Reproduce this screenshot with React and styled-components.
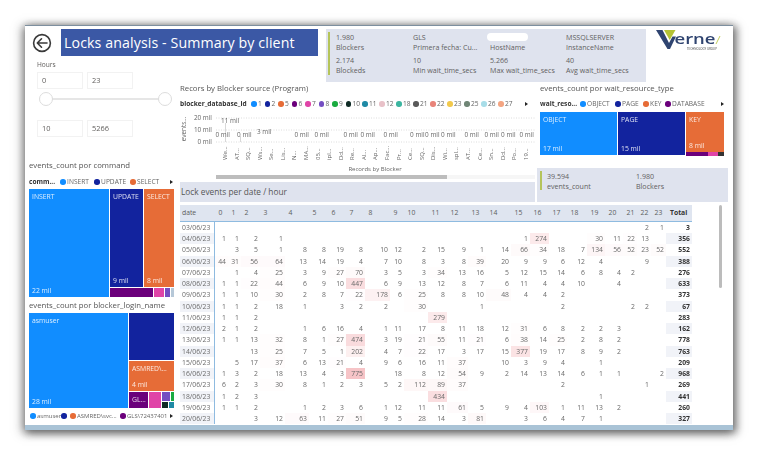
import React from 'react';
import styled, { createGlobalStyle } from 'styled-components';

const Global = createGlobalStyle`
  html, body { margin: 0; padding: 0; background: #fff; width: 759px; height: 454px; overflow: hidden; }
  * { box-sizing: border-box; }
  body { font-family: "Open Sans", "Noto Sans", sans-serif; color: #605e5c; }
`;

const Page = styled.div`
  width: 759px;
  height: 454px;
  padding: 25px 26px 24px 25px;
`;

const Report = styled.main`
  width: 708px;
  height: 405px;
  background: #fff;
  border-top: 1px solid #7d8f9f;
  border-bottom: 5px solid #a9c3d6;
  box-shadow: -2px 2px 9px 1px rgba(50, 50, 50, 0.5), 3px 2px 8px 1px rgba(50, 50, 50, 0.55);
  padding: 3px 5px 0 4px;
  filter: blur(0.45px);
  overflow: hidden;
`;

const Layout = styled.div`
  display: grid;
  grid-template-columns: 32px 119px 146px 211px 109px 82px;
  grid-template-rows: 27px 26px 86px 14px 23px 220px;
  grid-template-areas:
    "back title title kpi kpi logo"
    "left left . kpi kpi logo"
    "left left chart chart wait wait"
    "left left chart chart side side"
    "left left head head side side"
    "left left table table table table";
`;

const BackButton = styled.div`
  grid-area: back;
  padding: 4px 0 0 3px;
  color: #3a3a3a;
`;

const Title = styled.h1`
  grid-area: title;
  margin: 0 8px 0 0;
  background: #3b58a5;
  color: #fff;
  font-size: 14.2px;
  font-weight: 400;
  line-height: 27px;
  padding-left: 3px;
  white-space: nowrap;
  letter-spacing: 0.1px;
`;

const Kpi = styled.section`
  grid-area: kpi;
  background: #dfe3ee;
  display: flex;
  padding: 3px 0 0 2px;
  height: 53px;
`;

const KpiBar = styled.div`
  width: 2px;
  height: 43px;
  background: #b5c45a;
  margin-right: 6px;
  flex: none;
`;

const KpiGrid = styled.div`
  display: grid;
  grid-template-columns: 77px 77px 76px 76px;
  grid-template-rows: repeat(2, 23px);
`;

const KpiCell = styled.div`
  font-size: 7.1px;
  line-height: 10px;
  color: #5f5f5f;
  white-space: nowrap;
`;

const Blob = styled.span`
  display: block;
  width: 41px;
  height: 8px;
  margin: 1px 0 1px -3px;
  background: #fff;
  border-radius: 4px;
`;

const LogoBox = styled.div`
  grid-area: logo;
  padding: 0 0 0 10px;
  margin-top: -2px;
`;

const LeftColumn = styled.aside`
  grid-area: left;
  display: flex;
  flex-direction: column;
  padding-top: 4px;
  width: 146px;
`;

const SliderBlock = styled.div`
  padding: 0 0 0 8px;
  height: 99px;
`;

const SmallLabel = styled.div`
  font-size: 6.6px;
  line-height: 9px;
  margin-bottom: 3px;
`;

const InputRow = styled.div`
  display: flex;
  gap: 4px;
`;

const NumberBox = styled.div`
  width: 46px;
  height: 17px;
  border: 1px solid #f2f2f2;
  font-size: 7.4px;
  line-height: 15px;
  padding-left: 4px;
`;

const Track = styled.div`
  position: relative;
  height: 31px;
  width: 129px;
  margin-left: 2px;
`;

const TrackLine = styled.div`
  position: absolute;
  left: 7px;
  right: -2px;
  top: 9px;
  height: 2px;
  background: #e6e6e6;
`;

const Handle = styled.div`
  position: absolute;
  top: 3px;
  left: ${p => p.$left}px;
  width: 14px;
  height: 14px;
  border-radius: 50%;
  background: #fff;
  border: 1px solid #dcdcdc;
`;

const ChartTitle = styled.h2`
  margin: 0;
  font-size: 7.75px;
  font-weight: 400;
  line-height: 12px;
  color: #555;
  white-space: nowrap;
`;

const Legend = styled.div`
  display: flex;
  align-items: center;
  height: 10px;
  font-size: 6.6px;
  line-height: 10px;
  white-space: nowrap;
  color: #666;
  position: relative;
`;

const LegendName = styled.strong`
  font-weight: 700;
  color: #333;
  margin-right: ${p => p.$gap || 5}px;
  font-size: 6.6px;
`;

const LegendItem = styled.span`
  display: inline-flex;
  align-items: center;
  width: ${p => (p.$w ? `${p.$w}px` : 'auto')};
  flex: none;
`;

const Dot = styled.i`
  display: block;
  width: 5.5px;
  height: 5.5px;
  border-radius: 50%;
  background: ${p => p.$c};
  margin-right: 1.5px;
  flex: none;
`;

const More = styled.span`
  position: absolute;
  left: ${p => p.$left}px;
  top: 2.5px;
  width: 0;
  height: 0;
  border-left: 3px solid #222;
  border-top: 2.5px solid transparent;
  border-bottom: 2.5px solid transparent;
`;

const Map = styled.div`
  display: flex;
  gap: ${p => p.$gap ?? 1}px;
  flex-direction: ${p => (p.$col ? 'column' : 'row')};
  width: ${p => (p.$w ? `${p.$w}px` : 'auto')};
  height: ${p => (p.$h ? `${p.$h}px` : 'auto')};
  flex: ${p => (p.$grow ? 1 : 'none')};
  min-height: 0;
`;

const Tile = styled.div`
  background: ${p => p.$c};
  width: ${p => (p.$w ? `${p.$w}px` : 'auto')};
  height: ${p => (p.$h ? `${p.$h}px` : 'auto')};
  flex: ${p => (p.$grow ? 1 : 'none')};
  color: rgba(255, 255, 255, 0.85);
  font-size: 6.8px;
  line-height: 10px;
  padding: 3px 0 1px 3px;
  display: flex;
  flex-direction: column;
  justify-content: space-between;
  overflow: hidden;
  white-space: nowrap;
`;

const ChartBox = styled.section`
  grid-area: chart;
`;

const WaitBox = styled.section`
  grid-area: wait;
  padding-left: 3px;
`;

const SideKpi = styled.section`
  grid-area: side;
  background: #dfe3ee;
  display: flex;
  padding: 3px 0 0 3px;
  margin-bottom: 3px;
`;

const SideBar = styled.div`
  width: 2px;
  height: 19px;
  background: #b5c45a;
  margin-right: 5px;
`;

const SideGrid = styled.div`
  display: grid;
  grid-template-columns: 89px 60px;
`;

const SectionHead = styled.div`
  grid-area: head;
  background: #dfe3ee;
  font-size: 8.3px;
  line-height: 20px;
  padding-left: 1px;
  color: #555;
  margin: 0 2px 3px 0;
`;

const TableBox = styled.section`
  grid-area: table;
  position: relative;
  overflow: hidden;
  font-size: 6.8px;
  color: #6a6a6a;
`;

const COLS = '35px 13px 13px 19px 25px 24px 19px 18px 19px 25px 14px 24px 19px 21px 18px 25px 19px 19px 18px 20px 18px 18px 14px 14px 15px 26px';

const HeaderRow = styled.div`
  display: grid;
  grid-template-columns: ${COLS};
  height: 17px;
  width: 512px;
  background: #dfe5f0;
  border-bottom: 1px solid #8fbbe0;
  line-height: 15px;
`;

const HeadCell = styled.span`
  padding-left: ${p => (p.$first ? 2 : 3.5)}px;
  white-space: nowrap;
  color: #5c5c5c;
`;

const HeadTotal = styled.strong`
  font-weight: 700;
  color: #333;
  padding-left: 4px;
`;

const DataRow = styled.div`
  display: grid;
  grid-template-columns: ${COLS};
  height: 11.24px;
  width: 512px;
  line-height: 11.24px;
`;

const DateCell = styled.span`
  padding-left: 2px;
  border-right: 1px solid #8fbbe0;
  background: ${p => (p.$alt ? '#f1f3f8' : '#fff')};
  white-space: nowrap;
  overflow: hidden;
`;

const Cell = styled.span`
  text-align: right;
  padding-right: 2px;
  white-space: nowrap;
`;

const TotalCell = styled.strong`
  font-weight: 700;
  color: #333;
  text-align: right;
  padding-right: 2px;
  background: ${p => (p.$alt ? '#f1f3f8' : '#fff')};
`;

const ScrollThumb = styled.div`
  position: absolute;
  left: 539px;
  top: 0;
  width: 3px;
  height: 83px;
  border-radius: 2px;
  background: #bcbcbc;
`;

const PlotText = styled.text`
  font-family: "Open Sans", "Noto Sans", sans-serif;
  font-size: ${p => p.$s || 6.4}px;
  fill: #666;
`;

const PlotSvg = styled.svg`
  display: block;
`;

const dbLegend = [
  ['1', '#118dff'], ['2', '#12239e'], ['5', '#e66c37'], ['6', '#6b007b'], ['7', '#e044a7'], ['8', '#744ec2'],
  ['9', '#1aab40'], ['10', '#0e2a24'], ['11', '#1f8aa5'], ['12', '#e8c1c8'], ['18', '#3cb5a0'], ['21', '#5a5a5a'],
  ['22', '#e8847a'], ['23', '#f2c94c'], ['25', '#6f8575'], ['26', '#a8dde8'], ['27', '#f4a582'],
];
const dbWidth = [13.5, 13.5, 13.5, 13.5, 13.5, 13.5, 13.5, 16.5, 17, 17, 17, 17, 17, 17, 17, 17, 17];

const axisLabels = ['We...', 'AT...', 'SQ...', 'Ws...', 'Se...', 'Lis...', 'N...', 'MA...', '05...', 'ipl...', 'Dd...', 'Re...', 'Al...', 'Ap...', 'Fac...', 'Pr...', 'Ce...', 'SQ...', 'Dis...', 'Wi...', 'spl...', 'AT...', 'Ce...', 'Sn...', 'Dd...', 'Po...', '19...'];
const zeroLabels = [143, 208, 380, 440, 527, 578, 647, 727, 772, 820, 890, 950, 1000, 1055];

const rows = [
  ['03/06/23', {22:2,23:1}, 3],
  ['04/06/23', {0:1,1:1,2:2,3:1,15:1,16:274,19:30,20:11,21:22,22:13}, 356],
  ['05/06/23', {1:3,2:5,3:1,4:8,5:8,6:19,7:8,8:10,9:12,10:2,11:15,12:9,13:1,14:14,15:66,16:34,17:18,18:7,19:134,20:56,21:52,22:23,23:52}, 552],
  ['06/06/23', {0:44,1:31,2:56,3:64,4:13,5:14,6:19,7:4,8:7,9:10,10:8,11:3,12:8,13:39,14:20,15:9,16:9,17:6,18:12,19:4,22:9}, 388],
  ['07/06/23', {1:1,2:4,3:25,4:3,5:9,6:27,7:70,8:3,9:5,10:3,11:34,12:13,13:16,14:5,15:12,16:15,17:14,18:6,19:8,20:4,21:2}, 276],
  ['08/06/23', {0:1,1:1,2:22,3:44,4:6,5:9,6:10,7:447,8:6,9:9,10:13,11:12,12:8,13:7,14:6,15:11,16:4,17:4,18:10,20:4}, 633],
  ['09/06/23', {0:1,1:1,2:10,3:30,4:2,5:8,6:7,7:22,8:178,9:6,10:25,11:8,12:8,13:10,14:48,15:4,16:4,17:2}, 373],
  ['10/06/23', {0:1,1:1,2:2,3:18,4:1,6:3,7:2,8:2,10:30,13:1,17:2,21:2,22:2}, 67],
  ['11/06/23', {0:1,1:1,2:2,11:279}, 283],
  ['12/06/23', {0:2,1:1,2:2,4:1,5:6,6:16,7:4,8:1,9:11,10:17,11:8,12:11,13:18,14:12,15:31,16:6,17:8,18:2,19:2,20:3}, 162],
  ['13/06/23', {0:1,1:1,2:13,3:32,4:8,5:1,6:27,7:474,8:3,9:19,10:21,11:55,12:11,13:21,14:6,15:38,16:14,17:25,18:2,19:8,20:2}, 778],
  ['14/06/23', {2:13,3:25,4:7,5:5,6:1,7:202,8:4,9:7,10:22,11:17,12:3,13:17,14:15,15:377,16:19,17:17,18:8,19:9,20:2}, 763],
  ['15/06/23', {1:5,2:17,3:37,4:6,5:13,6:21,7:4,8:9,9:6,10:16,11:11,12:37,14:10,15:3,16:9,17:4,19:1}, 209],
  ['16/06/23', {0:1,1:3,2:2,3:18,4:13,5:4,6:3,7:775,9:18,10:8,11:12,12:54,13:9,14:2,15:14,16:13,17:14,18:6,19:1,20:1,23:2}, 968],
  ['17/06/23', {0:6,1:2,2:3,3:30,4:8,5:1,6:2,7:3,8:5,9:2,10:112,11:89,12:37,17:2,22:1}, 269],
  ['18/06/23', {0:1,1:2,2:3,11:434,19:1}, 441],
  ['19/06/23', {0:1,1:1,2:2,4:1,5:2,6:3,7:6,8:1,9:12,10:11,11:11,12:61,13:5,14:9,15:4,16:103,17:1,18:11,19:13,20:2}, 260],
  ['20/06/23', {2:3,3:12,4:63,5:11,6:27,7:51,8:9,9:5,10:28,11:14,12:3,13:81,15:3,16:6,17:4,18:7,19:1}, 327],
];
const hours = Array.from({ length: 24 }, (_, i) => i);
const heat = v => (v && v > 20 ? `rgba(224, 60, 70, ${Math.min(0.3, (v / 775) * 0.3).toFixed(3)})` : undefined);

const BackIcon = () => (
  <svg width="20" height="20" viewBox="0 0 20 20" fill="none" stroke="#3a3a3a" strokeWidth="1.6">
    <circle cx="10" cy="10" r="8.4" />
    <path d="M15 10H5.5M9.5 5.8 5.3 10l4.2 4.2" strokeLinecap="round" strokeLinejoin="round" />
  </svg>
);

const Logo = () => (
  <svg width="68" height="26" viewBox="0 0 68 26">
    <path d="M0 3h6.5l6.5 13 3.5-6.5h3.5L14 22h-2.5z" fill="#2f4470" />
    <path d="M8 3h11.5l-5.8 10z" fill="#b4c234" />
    <text x="18.5" y="17" fontFamily="'Open Sans', sans-serif" fontSize="15" fontWeight="600" fill="#2f4470" textLength="41" lengthAdjust="spacingAndGlyphs">erne</text>
    <path d="M60 17l4-8" stroke="#b4c234" strokeWidth="0.8" />
    <text x="31" y="23" fontFamily="'Open Sans', sans-serif" fontSize="2.6" fill="#444" textLength="30" lengthAdjust="spacingAndGlyphs">TECHNOLOGY GROUP</text>
  </svg>
);

const Plot = () => (
  <PlotSvg width="356" height="76" viewBox="180 108 356 76">
    <g stroke="#cfcfcf" strokeWidth="0.7" strokeDasharray="1 1.5">
      <line x1="216" x2="535" y1="118" y2="118" />
      <line x1="216" x2="535" y1="130" y2="130" />
      <line x1="216" x2="535" y1="142" y2="142" />
    </g>
    <rect x="225" y="123" width="1" height="19" fill="#d8d8d8" />
    <rect x="240" y="136" width="1" height="6" fill="#d8d8d8" />
    <PlotText x="186" y="129" transform="rotate(-90 186 129)" textAnchor="middle">events...</PlotText>
    <PlotText x="212" y="120" textAnchor="end">20 mil</PlotText>
    <PlotText x="212" y="132" textAnchor="end">10 mil</PlotText>
    <PlotText x="212" y="144" textAnchor="end">0 mil</PlotText>
    <PlotText x="221" y="123">11 mil</PlotText>
    <PlotText x="257" y="134">3 mil</PlotText>
    {zeroLabels.map((v, i) => (
      <PlotText key={i} x={175 + v / 3} y={136.5} textAnchor="middle">0 mil</PlotText>
    ))}
    {axisLabels.map((t, i) => {
      const x = 227 + i * 11.57;
      return (
        <PlotText key={i} x={x} y={160} transform={`rotate(-90 ${x} 160)`} $s={6}>{t}</PlotText>
      );
    })}
    <PlotText x="375" y="171" textAnchor="middle" $s={6}>Records by Blocker</PlotText>
    <rect x="216" y="175" width="319" height="4" fill="#f6f6f6" />
    <rect x="216" y="175" width="231" height="4" fill="#bdbdbd" />
  </PlotSvg>
);

const kpis = [
  ['1.980', 'Blockers'], ['GLS', 'Primera fecha: Cu...'], [null, 'HostName'], ['MSSQLSERVER', 'InstanceName'],
  ['2.174', 'Blockeds'], ['10', 'Min wait_time_secs'], ['5.266', 'Max wait_time_secs'], ['40', 'Avg wait_time_secs'],
];

const CommandLegend = styled(Legend)`
  margin: 6px 0 2px;
`;

const LoginTitle = styled(ChartTitle)`
  margin: 2px 0;
`;

const LoginLegend = styled(Legend)`
  margin-top: 3px;
  padding-left: 1px;
  font-size: 6px;
`;

const DbLegend = styled(Legend)`
  margin: 5px 0 -1px;
`;

const WaitLegend = styled(Legend)`
  margin: 5px 0 3px;
`;

export default function App() {
  return (
    <Page>
      <Global />
      <Report>
        <Layout>
          <BackButton><BackIcon /></BackButton>
          <Title>Locks analysis - Summary by client</Title>
          <Kpi>
            <KpiBar />
            <KpiGrid>
              {kpis.map(([a, b]) => (
                <KpiCell key={b}>{a === null ? <Blob /> : <div>{a}</div>}<div>{b}</div></KpiCell>
              ))}
            </KpiGrid>
          </Kpi>
          <LogoBox><Logo /></LogoBox>

          <LeftColumn>
            <SliderBlock>
              <SmallLabel>Hours</SmallLabel>
              <InputRow><NumberBox>0</NumberBox><NumberBox>23</NumberBox></InputRow>
              <Track>
                <TrackLine />
                <Handle $left={0} />
                <Handle $left={119} />
              </Track>
              <InputRow><NumberBox>10</NumberBox><NumberBox>5266</NumberBox></InputRow>
            </SliderBlock>
            <ChartTitle>events_count por command</ChartTitle>
            <CommandLegend>
              <LegendName $gap={5}>comm...</LegendName>
              <LegendItem $w={34}><Dot $c="#118dff" />INSERT</LegendItem>
              <LegendItem $w={36}><Dot $c="#12239e" />UPDATE</LegendItem>
              <LegendItem><Dot $c="#e66c37" />SELECT</LegendItem>
              <More $left={141} />
            </CommandLegend>
            <Map $h={108} $w={145}>
              <Tile $c="#118dff" $w={80}><span>INSERT</span><span>22 mil</span></Tile>
              <Map $col $grow>
                <Map $h={98}>
                  <Tile $c="#12239e" $w={33}><span>UPDATE</span><span>9 mil</span></Tile>
                  <Tile $c="#e66c37" $grow><span>SELECT</span><span>8 mil</span></Tile>
                </Map>
                <Map $grow>
                  <Tile $c="#6b007b" $w={43} />
                  <Tile $c="#e044a7" $w={10} />
                  <Tile $c="#744ec2" $w={5} />
                  <Tile $c="#b6c8d8" $grow />
                </Map>
              </Map>
            </Map>
            <LoginTitle>events_count por blocker_login_name</LoginTitle>
            <Map $h={95} $w={145}>
              <Tile $c="#118dff" $w={99}><span>asmuser</span><span>28 mil</span></Tile>
              <Map $col $grow>
                <Tile $c="#12239e" $h={47} />
                <Tile $c="#e66c37" $h={30}><span>ASMRED\...</span><span>4 mil</span></Tile>
                <Map $grow>
                  <Tile $c="#6b007b" $w={19}><span>GL...</span></Tile>
                  <Tile $c="#e044a7" $w={12} />
                  <Map $col $grow>
                    <Map $h={9}>
                      <Tile $c="#744ec2" $grow />
                      <Tile $c="#1aab40" $w={2} />
                    </Map>
                    <Map $grow>
                      <Tile $c="#0e2a24" $grow />
                      <Tile $c="#1f8aa5" $grow />
                    </Map>
                  </Map>
                </Map>
              </Map>
            </Map>
            <LoginLegend>
              <LegendItem $w={31}><Dot $c="#118dff" />asmuser</LegendItem>
              <LegendItem $w={9}><Dot $c="#12239e" /></LegendItem>
              <LegendItem $w={50}><Dot $c="#e66c37" />ASMRED\svc...</LegendItem>
              <LegendItem><Dot $c="#6b007b" />GLS\72437401</LegendItem>
              <More $left={141} />
            </LoginLegend>
          </LeftColumn>

          <ChartBox>
            <ChartTitle>Recors by Blocker source (Program)</ChartTitle>
            <DbLegend>
              <LegendName $gap={4.5}>blocker_database_id</LegendName>
              {dbLegend.map(([n, c], i) => (
                <LegendItem key={n} $w={dbWidth[i]}><Dot $c={c} />{n}</LegendItem>
              ))}
              <More $left={345} />
            </DbLegend>
            <Plot />
          </ChartBox>

          <WaitBox>
            <ChartTitle>events_count por wait_resource_type</ChartTitle>
            <WaitLegend>
              <LegendName $gap={3}>wait_reso...</LegendName>
              <LegendItem $w={35}><Dot $c="#118dff" />OBJECT</LegendItem>
              <LegendItem $w={28}><Dot $c="#12239e" />PAGE</LegendItem>
              <LegendItem $w={22}><Dot $c="#e66c37" />KEY</LegendItem>
              <LegendItem><Dot $c="#6b007b" />DATABASE</LegendItem>
              <More $left={181} />
            </WaitLegend>
            <Map $h={43} $w={184}>
              <Tile $c="#118dff" $w={77}><span>OBJECT</span><span>17 mil</span></Tile>
              <Tile $c="#12239e" $w={67}><span>PAGE</span><span>15 mil</span></Tile>
              <Map $col $grow $gap={0}>
                <Tile $c="#e66c37" $h={40}><span>KEY</span><span>8 mil</span></Tile>
                <Map $grow $gap={0}>
                  <Tile $c="#6b007b" $w={22} />
                  <Tile $c="#e044a7" $w={10} />
                  <Tile $c="#333" $grow />
                </Map>
              </Map>
            </Map>
          </WaitBox>

          <SideKpi>
            <SideBar />
            <SideGrid>
              <KpiCell><div>39.594</div><div>events_count</div></KpiCell>
              <KpiCell><div>1.980</div><div>Blockers</div></KpiCell>
            </SideGrid>
          </SideKpi>

          <SectionHead>Lock events per date / hour</SectionHead>

          <TableBox>
            <HeaderRow>
              <HeadCell $first>date</HeadCell>
              {hours.map(h => <HeadCell key={h}>{h}</HeadCell>)}
              <HeadTotal>Total</HeadTotal>
            </HeaderRow>
            {rows.map(([d, vals, total], i) => (
              <DataRow key={d}>
                <DateCell $alt={i % 2 === 1}>{d}</DateCell>
                {hours.map(h => (
                  <Cell key={h} style={{ background: heat(vals[h]) }}>{vals[h] ?? ''}</Cell>
                ))}
                <TotalCell $alt={i % 2 === 1}>{total}</TotalCell>
              </DataRow>
            ))}
            <ScrollThumb />
          </TableBox>
        </Layout>
      </Report>
    </Page>
  );
}
